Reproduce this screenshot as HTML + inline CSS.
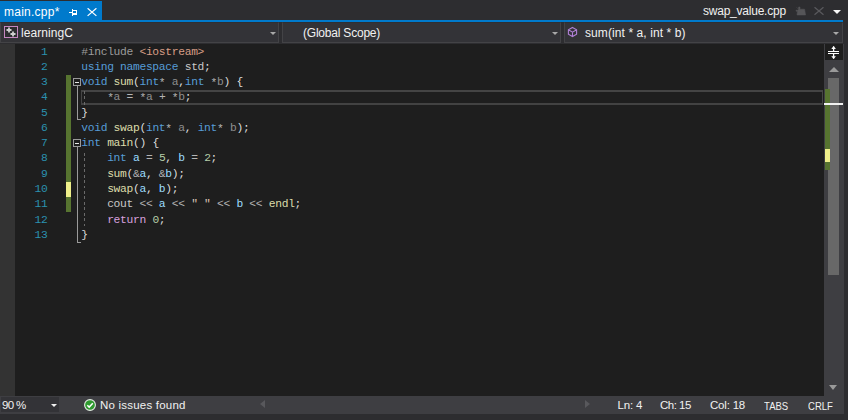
<!DOCTYPE html>
<html>
<head>
<meta charset="utf-8">
<style>
*{box-sizing:border-box;margin:0;padding:0}
html,body{width:848px;height:420px;overflow:hidden;background:#2d2d30}
body{font-family:"Liberation Sans",sans-serif;font-size:12px;color:#f1f1f1;position:relative}
.abs{position:absolute}
#tabstrip{left:0;top:0;width:848px;height:20px;background:#2d2d30}
#tab{left:0;top:1px;width:102px;height:19px;background:#007acc}
#tabline{left:0;top:20px;width:843px;height:2px;background:#007acc}
.tabtxt{top:5px;font-size:12px;line-height:15px;color:#fff;white-space:nowrap}
#navbar{left:0;top:22px;width:848px;height:22px;background:#2d2d30}
.combo{top:22px;height:21px;background:#333337;border:1px solid #434346;border-top:1px solid #2f2f32}
.combotxt{top:26px;font-size:12px;line-height:14px;color:#f1f1f1;white-space:nowrap}
.dd{width:0;height:0;border-left:3.5px solid transparent;border-right:3.5px solid transparent;border-top:3.5px solid #a8a8a8}
#editor{left:0;top:44px;width:824px;height:352px;background:#1e1e1e}
#margin{left:0;top:44px;width:15px;height:352px;background:#333333}
.code{font-family:"Liberation Mono",monospace;font-size:11.3px;letter-spacing:-0.32px;line-height:15.27px;white-space:pre;color:#dcdcdc}
.ln{left:0;width:47.5px;text-align:right;color:#2b91af}
.k{color:#569cd6}.p{color:#9b9b9b}.s{color:#d69d85}.f{color:#dcdcaa}.g{color:#8e8e8e}
.v{color:#9cdcfe}.n{color:#b5cea8}.c{color:#d8a0df}.o{color:#b4b4b4}.w{color:#c8c8c8}.s2{color:#dcc4b8}.a{position:relative;top:1px}
.green{background:#577430}
.yellow{background:#efef8a}
#vscroll{left:824px;top:44px;width:20px;height:352px;background:#3e3e42}
#status{left:0;top:396px;width:844px;height:18px;background:#3e3e42}
.st{top:398px;font-size:11.5px;line-height:14px;color:#f1f1f1;white-space:nowrap;transform-origin:0 0}
</style>
</head>
<body>
<div id="tabstrip" class="abs"></div>
<div id="tab" class="abs"></div>
<div id="tabline" class="abs"></div>
<div class="abs tabtxt" style="left:4px;letter-spacing:0.25px">main.cpp*</div>
<svg class="abs" style="left:68px;top:8px" width="10" height="9" viewBox="0 0 10 9"><path d="M1 4h3v1H1zM4 1h1v7H4zM5 2h4v1H5zM8 2h1v5H8zM5 5h4v2H5z" fill="#fff"/></svg>
<svg class="abs" style="left:87px;top:8px" width="10" height="9" viewBox="0 0 10 9"><path d="M0.6 0.3L9.4 7.9M9.4 0.3L0.6 7.9" stroke="#fff" stroke-width="1.25" fill="none"/></svg>
<div class="abs tabtxt" style="left:703px;top:4px;color:#f1f1f1;letter-spacing:-0.23px">swap_value.cpp</div>
<svg class="abs" style="left:795px;top:6px" width="12" height="10" viewBox="0 0 12 10"><path d="M3.6 1h1.4v2.2h4.6l1 5.8H2l0.5-3.8H1v-1h1.6l1-1z M1.5 1.2l2 2" fill="#555558" stroke="#555558" stroke-width="0.5"/></svg>
<svg class="abs" style="left:814px;top:7px" width="10" height="9" viewBox="0 0 10 9"><path d="M0.5 0.2L9.5 7.8M9.5 0.2L0.5 7.8" stroke="#58585c" stroke-width="1.25" fill="none"/></svg>
<div class="abs" style="left:833px;top:10px;width:0;height:0;border-left:4px solid transparent;border-right:4px solid transparent;border-top:4px solid #f8f8f8"></div>

<div id="navbar" class="abs"></div>
<div class="abs combo" style="left:0px;width:279px"></div>
<div class="abs combo" style="left:282px;width:279px"></div>
<div class="abs combo" style="left:564px;width:279px"></div>
<svg class="abs" style="left:4px;top:26px" width="14" height="12" viewBox="0 0 14 12"><rect x="0.5" y="0.5" width="13" height="11" fill="#2d2d30" stroke="#c586c0"/><path d="M2.5 3.1h5v1.8h-5zM4.1 1.5h1.8v5H4.1zM6.5 7.1h5v1.8h-5zM8.1 5.5h1.8v5H8.1z" fill="#cfcfcf"/></svg>
<div class="abs combotxt" style="left:21px;letter-spacing:0.08px">learningC</div>
<div class="abs combotxt" style="left:303px;letter-spacing:-0.21px">(Global Scope)</div>
<svg class="abs" style="left:567px;top:26px" width="12" height="12" viewBox="0 0 12 12"><path d="M5.5 1.4L9.6 3.7V8.3L5.5 10.6L1.4 8.3V3.7Z M1.4 3.7L5.5 6.1L9.6 3.7M5.5 6.1V10.6" stroke="#b180d7" stroke-width="1.1" fill="none"/></svg>
<div class="abs combotxt" style="left:585px;letter-spacing:0.09px">sum(int * a, int * b)</div>
<div class="abs dd" style="left:270px;top:32px"></div>
<div class="abs dd" style="left:552px;top:32px"></div>
<div class="abs dd" style="left:833px;top:32px"></div>

<div id="editor" class="abs"></div>
<div id="margin" class="abs"></div>

<div class="abs code ln" style="top:44.6px">1
2
3
4
5
6
7
8
9
10
11
12
13</div>

<div class="abs green" style="left:66px;top:75px;width:4.6px;height:137px"></div>
<div class="abs yellow" style="left:66px;top:182px;width:4.6px;height:15px"></div>

<div class="abs" style="left:81px;top:90px;width:742px;height:15px;border:1px solid #454545;border-top:2px solid #444;border-bottom:2px solid #424242"></div>

<!-- outlining -->
<div class="abs" style="left:77px;top:86px;width:1px;height:34px;background:#9a9a9a"></div>
<div class="abs" style="left:77px;top:119px;width:4px;height:1px;background:#9a9a9a"></div>
<div class="abs" style="left:73px;top:78px;width:8px;height:8px;border:1px solid #9a9a9a;background:#1e1e1e"></div>
<div class="abs" style="left:75px;top:82px;width:4px;height:1px;background:#e8e8e8"></div>
<div class="abs" style="left:77px;top:147px;width:1px;height:96px;background:#9a9a9a"></div>
<div class="abs" style="left:77px;top:242px;width:4px;height:1px;background:#9a9a9a"></div>
<div class="abs" style="left:73px;top:139px;width:8px;height:8px;border:1px solid #9a9a9a;background:#1e1e1e"></div>
<div class="abs" style="left:75px;top:143px;width:4px;height:1px;background:#e8e8e8"></div>
<!-- indent guides -->
<div class="abs" style="left:84px;top:91.4px;width:1px;height:13.4px;background:repeating-linear-gradient(to bottom,#6a6a6a 0,#6a6a6a 2.7px,transparent 2.7px,transparent 5.43px)"></div>
<div class="abs" style="left:84px;top:153.1px;width:1px;height:73.6px;background:repeating-linear-gradient(to bottom,#6a6a6a 0,#6a6a6a 2.8px,transparent 2.8px,transparent 5.43px)"></div>

<div class="abs code" style="left:81.3px;top:44.6px"><span class="p">#include</span> <span class="s">&lt;iostream&gt;</span>
<span class="k">using</span> <span class="k">namespace</span> <span class="w">std</span>;
<span class="k">void</span> <span class="f">sum</span>(<span class="k">int</span><span class="o a">*</span> <span class="g">a</span>,<span class="k">int</span> <span class="o a">*</span><span class="g">b</span>) {
    <span class="o a">*</span><span class="g">a</span> <span class="o">=</span> <span class="o a">*</span><span class="g">a</span> <span class="o">+</span> <span class="o a">*</span><span class="g">b</span>;
}
<span class="k">void</span> <span class="f">swap</span>(<span class="k">int</span><span class="o a">*</span> <span class="g">a</span>, <span class="k">int</span><span class="o a">*</span> <span class="g">b</span>);
<span class="k">int</span> <span class="f">main</span>() {
    <span class="k">int</span> <span class="v">a</span> <span class="o">=</span> <span class="n">5</span>, <span class="v">b</span> <span class="o">=</span> <span class="n">2</span>;
    <span class="f">sum</span>(<span class="o">&amp;</span><span class="v">a</span>, <span class="o">&amp;</span><span class="v">b</span>);
    <span class="f">swap</span>(<span class="v">a</span>, <span class="v">b</span>);
    <span class="w">cout</span> <span class="o">&lt;&lt;</span> <span class="v">a</span> <span class="o">&lt;&lt;</span> <span class="s2">" "</span> <span class="o">&lt;&lt;</span> <span class="v">b</span> <span class="o">&lt;&lt;</span> <span class="f">endl</span>;
    <span class="c">return</span> <span class="n">0</span>;
}</div>

<!-- vertical scrollbar -->
<div id="vscroll" class="abs"></div>
<div class="abs" style="left:825px;top:44px;width:18px;height:16px;background:#1e1e1e"></div>
<svg class="abs" style="left:827px;top:45px" width="13" height="15" viewBox="0 0 13 15"><path d="M1 6h11v1H1zM1 8h11v1H1z" fill="#fff"/><path d="M6.6 1.5V6M6.6 9V13.5" stroke="#fff" stroke-width="1.3" fill="none"/><path d="M4.3 4L6.6 0.9L8.9 4zM4.3 11.2L6.6 14.1L8.9 11.2z" fill="#fff"/></svg>
<div class="abs" style="left:829px;top:67px;width:0;height:0;border-left:5px solid transparent;border-right:5px solid transparent;border-bottom:5px solid #999"></div>
<div class="abs" style="left:829px;top:385px;width:0;height:0;border-left:4.5px solid transparent;border-right:4.5px solid transparent;border-top:5px solid #999"></div>
<div class="abs" style="left:828px;top:78px;width:11px;height:197px;background:#686868"></div>
<div class="abs" style="left:825px;top:89px;width:4.6px;height:81px;background:#577430"></div>
<div class="abs" style="left:825px;top:149px;width:4.6px;height:13px;background:#efef8a"></div>
<div class="abs" style="left:824px;top:103px;width:19px;height:2px;background:#f1f1f1"></div>

<!-- bottom bar -->
<div id="status" class="abs"></div>
<div class="abs" style="left:1px;top:397px;width:58px;height:15px;background:#333337"></div>
<div class="abs st" style="left:2px;letter-spacing:-0.67px">90 %</div>
<div class="abs dd" style="left:50.5px;top:404px;border-top-color:#f1f1f1"></div>
<svg class="abs" style="left:84px;top:399px" width="12" height="12" viewBox="0 0 12 12"><circle cx="6" cy="6" r="5.4" fill="#2e9a2e" stroke="#e4ece4" stroke-width="1.1"/><path d="M3.3 6.2L5.2 8.1L8.8 4.2" stroke="#fff" stroke-width="1.5" fill="none"/></svg>
<div class="abs st" style="left:100px;letter-spacing:0.21px">No issues found</div>
<div class="abs" style="left:260px;top:400px;width:0;height:0;border-top:4.5px solid transparent;border-bottom:4.5px solid transparent;border-right:5px solid #58585c"></div>
<div class="abs" style="left:585px;top:400px;width:0;height:0;border-top:4.5px solid transparent;border-bottom:4.5px solid transparent;border-left:5px solid #58585c"></div>
<div class="abs st" style="left:617.6px;letter-spacing:-0.17px">Ln: 4</div>
<div class="abs st" style="left:660px;letter-spacing:-0.5px">Ch: 15</div>
<div class="abs st" style="left:710px;letter-spacing:-0.2px">Col: 18</div>
<div class="abs st" style="left:764px;top:399px;font-size:10.8px;transform:scaleX(0.885)">TABS</div>
<div class="abs st" style="left:808px;top:399px;font-size:10.8px;transform:scaleX(0.885)">CRLF</div>
</body>
</html>
